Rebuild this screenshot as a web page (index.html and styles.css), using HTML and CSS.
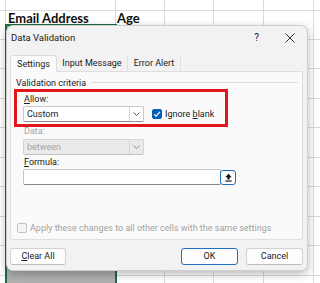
FILE: index.html
```html
<!DOCTYPE html>
<html>
<head>
<meta charset="utf-8">
<link rel="stylesheet" href="styles.css">
</head>
<body>
<div class="sheet">
  <div class="header-row">
    <div class="cell gutter"></div>
    <div class="cell col-a">Email Address</div>
    <div class="cell col-b">Age</div>
  </div>
  <div class="selection"></div>
  <div class="dialog">
    <div class="titlebar">
      <span class="title">Data Validation</span>
      <span class="help">?</span>
      <svg class="close" width="10" height="10" viewBox="0 0 10 10"><path d="M0.5 0.5L9.5 9.5M9.5 0.5L0.5 9.5" stroke="#333" stroke-width="1" fill="none"/></svg>
    </div>
    <div class="tabs">
      <div class="tab active tab-settings">Settings</div>
      <div class="tab tab-input">Input Message</div>
      <div class="tab tab-error">Error Alert</div>
    </div>
    <div class="panel">
      <div class="group-title"><span>Validation criteria</span><span class="rule"></span></div>
      <div class="highlight">
        <div class="label"><u>A</u>llow:</div>
        <div class="allow-row">
          <div class="combo">
            <span class="combo-text">Custom</span>
            <span class="combo-btn"><svg width="7" height="4" viewBox="0 0 7 4"><path d="M0.5 0.5L3.5 3.5L6.5 0.5" stroke="#555" stroke-width="1" fill="none"/></svg></span>
          </div>
          <div class="check">
            <span class="box checked"><svg width="8" height="8" viewBox="0 0 8 8"><path d="M1.2 4.2L3.2 6.1L6.9 1.8" stroke="#fff" stroke-width="1.2" fill="none"/></svg></span>
            <span>Ignore <u>b</u>lank</span>
          </div>
        </div>
      </div>
      <div class="label disabled data-label">Data:</div>
      <div class="combo disabled">
        <span class="combo-text">between</span>
        <span class="combo-btn"><svg width="7" height="4" viewBox="0 0 7 4"><path d="M0.5 0.5L3.5 3.5L6.5 0.5" stroke="#8a8a8a" stroke-width="1" fill="none"/></svg></span>
      </div>
      <div class="label formula-label"><u>F</u>ormula:</div>
      <div class="formula">
        <div class="input"></div>
        <div class="ref-btn"><svg width="9" height="9" viewBox="0 0 9 9"><path d="M4.5 0.8L1.3 4.3H3.4V6.6H5.6V4.3H7.7Z" fill="#111"/><rect x="1.3" y="7.5" width="6.4" height="1.1" fill="#111"/></svg></div>
      </div>
      <div class="apply">
        <span class="box"></span>
        <span>Apply these changes to all other cells with the same settings</span>
      </div>
    </div>
    <div class="buttons">
      <div class="btn clear"><u>C</u>lear All</div>
      <div class="spacer"></div>
      <div class="btn ok">OK</div>
      <div class="btn cancel">Cancel</div>
    </div>
  </div>
</div>
</body>
</html>
```
FILE: styles.css
```css
html, body {
  margin: 0;
  padding: 0;
}
body {
  width: 320px;
  height: 283px;
  overflow: hidden;
  background: #fff;
  font-family: Roboto, "Noto Sans", sans-serif;
}
.sheet {
  position: relative;
  width: 320px;
  height: 283px;
  overflow: hidden;
  background:
    linear-gradient(#dadada, #dadada) 5px 0 / 1px 100% no-repeat,
    linear-gradient(#dadada, #dadada) 115px 0 / 1px 100% no-repeat,
    linear-gradient(#dadada, #dadada) 164px 0 / 1px 100% no-repeat,
    linear-gradient(#dadada, #dadada) 213px 0 / 1px 100% no-repeat,
    linear-gradient(#dadada, #dadada) 263px 0 / 1px 100% no-repeat,
    linear-gradient(#dadada, #dadada) 313px 0 / 1px 100% no-repeat,
    linear-gradient(#dadada, #dadada) 0 10px / 100% 1px no-repeat,
    repeating-linear-gradient(to bottom, #dadada 0 1px, transparent 1px 29.5px) 0 39px / 100% 244px no-repeat,
    #fff;
}
.header-row {
  display: grid;
  grid-template-columns: 6px 110px 50px;
  padding-top: 11px;
  height: 14px;
  line-height: 15px;
  font-family: Lato, "Open Sans", sans-serif;
  font-weight: 700;
  font-size: 13px;
  color: #111;
}
.col-a { padding-left: 2px; }
.col-b { padding-left: 1px; }

.selection {
  position: absolute;
  left: 5px;
  top: 24px;
  width: 108px;
  height: 270px;
  border: 2px solid #1e6b40;
  background: #b0b0b0;
}

.dialog {
  position: absolute;
  left: 6px;
  top: 25px;
  width: 300px;
  border: 1px solid #cfcfcf;
  border-radius: 7px;
  background: #f2f2f2;
  box-shadow: 0 3px 10px rgba(0,0,0,0.28);
  font-size: 9px;
  color: #1b1b1b;
  padding-bottom: 5px;
}
.titlebar {
  height: 23px;
  display: flex;
  align-items: center;
  padding-left: 4px;
  padding-right: 12px;
}
.title {
  font-size: 9.5px;
  flex: 1;
}
.help {
  font-size: 10px;
  margin-right: 26px;
}
.close { display: block; }

.tabs {
  display: flex;
  margin: 6px 0 0 3px;
  height: 17px;
  position: relative;
  z-index: 1;
}
.tab {
  line-height: 17px;
  text-align: center;
  box-sizing: border-box;
  border-right: 1px solid #e0e0e0;
}
.tab-settings { width: 47px; }
.tab-input { width: 71px; }
.tab-error { width: 53px; }
.tab.active {
  background: #fafafa;
  border: 1px solid #dcdcdc;
  border-bottom: none;
  border-radius: 3px 3px 0 0;
  line-height: 16px;
  height: 17px;
}

.panel {
  margin: -1px 4px 0 3px;
  border: 1px solid #dedede;
  background: #fafafa;
  border-radius: 0 0 3px 3px;
  padding: 5px 0 5px 0;
}
.group-title {
  display: flex;
  align-items: center;
  line-height: 12px;
  padding-left: 5px;
  padding-right: 4px;
}
.group-title .rule {
  flex: 1;
  height: 1px;
  background: #dcdcdc;
  margin-left: 5px;
  margin-top: -1px;
}

.highlight {
  margin-left: 3px;
  width: 202px;
  border: 3px solid #e3161d;
  padding: 1px 0 2px 6px;
}
.label {
  line-height: 12px;
  padding-left: 1px;
}
.highlight .label { margin-bottom: 1px; }
.allow-row {
  display: flex;
  align-items: center;
}
.combo {
  display: flex;
  width: 121px;
  height: 16px;
  box-sizing: border-box;
  border: 1px solid #c9c9c9;
  border-bottom-color: #8f8f8f;
  border-radius: 2px;
  background: #fff;
}
.combo-text {
  flex: 1;
  line-height: 14px;
  padding-left: 3px;
}
.combo-btn {
  width: 13px;
  border-left: 1px solid #d6d6d6;
  display: flex;
  align-items: center;
  justify-content: center;
}
.combo-btn svg { display: block; }
.check {
  display: flex;
  align-items: center;
  margin-left: 8px;
}
.box {
  width: 10px;
  height: 10px;
  box-sizing: border-box;
  border-radius: 2px;
  border: 1px solid #b0b0b0;
  background: #f6f6f6;
  margin-right: 3px;
  display: flex;
  align-items: center;
  justify-content: center;
}
.box.checked {
  background: #005fb8;
  border-color: #005fb8;
}
.box svg { display: block; }

.data-label {
  margin-left: 12px;
  margin-top: -1px;
  line-height: 11px;
  padding-left: 1px;
}
.disabled { color: #a2a2a2; }
.panel > .combo {
  margin-left: 12px;
  margin-top: 2px;
}
.combo.disabled {
  background: #eaeaea;
  border-color: #d3d3d3;
  border-bottom-color: #c2c2c2;
}
.formula-label {
  margin-left: 12px;
  margin-top: 1px;
}
.formula {
  display: flex;
  margin-left: 12px;
  margin-top: 1px;
  height: 16px;
}
.input {
  width: 198px;
  box-sizing: border-box;
  border: 1px solid #c6c6c6;
  border-bottom-color: #8a8a8a;
  background: #fff;
  border-radius: 2px 0 0 2px;
}
.ref-btn {
  width: 16px;
  height: 15px;
  margin-top: 1px;
  box-sizing: border-box;
  border: 1.5px solid #1f6fc0;
  border-radius: 3px;
  background: #fdfdfd;
  display: flex;
  align-items: center;
  justify-content: center;
  margin-left: -1px;
}
.ref-btn svg { display: block; }
.apply {
  display: flex;
  align-items: center;
  margin-top: 36px;
  margin-left: 6px;
  height: 13px;
  color: #a2a2a2;
}
.apply .box {
  width: 10px;
  height: 10px;
  border-color: #c4c4c4;
  background: #f4f4f4;
}

.buttons {
  display: flex;
  margin: 8px 4px 0 3px;
  gap: 8px;
}
.spacer { flex: 1; }
.btn {
  width: 57px;
  height: 17px;
  box-sizing: border-box;
  border: 1px solid #d2d2d2;
  border-bottom-color: #bdbdbd;
  border-radius: 3px;
  background: #fdfdfd;
  text-align: center;
  line-height: 15px;
}
.btn.clear { width: 56px; }
.btn.ok {
  border: 1.5px solid #1f6fc0;
  line-height: 14px;
}
```
